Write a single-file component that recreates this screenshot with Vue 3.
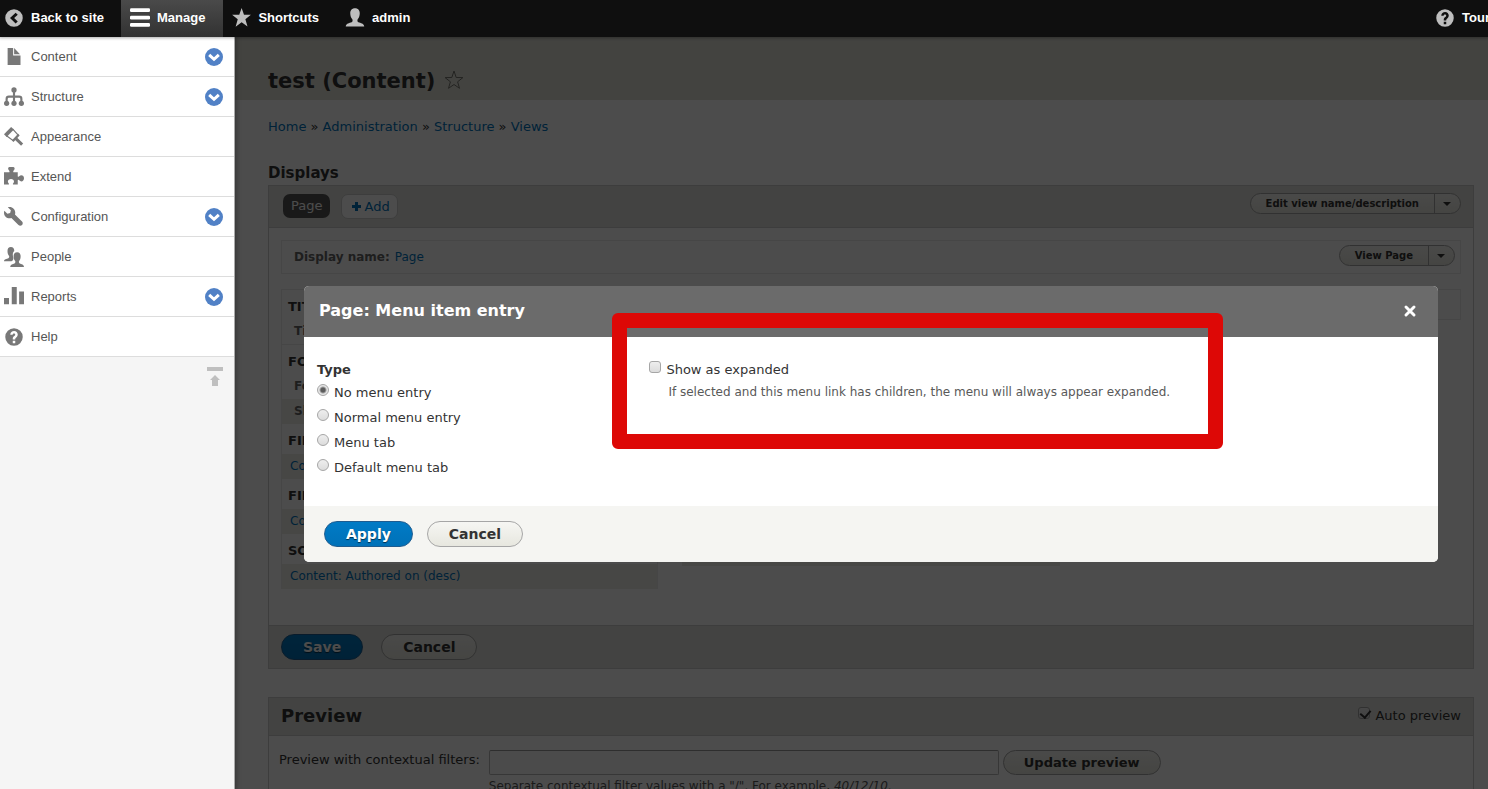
<script setup>
import { ref } from 'vue'

const menu = [
  { label: 'Content', icon: 'file', sub: true },
  { label: 'Structure', icon: 'tree', sub: true },
  { label: 'Appearance', icon: 'brush', sub: false },
  { label: 'Extend', icon: 'puzzle', sub: false },
  { label: 'Configuration', icon: 'wrench', sub: true },
  { label: 'People', icon: 'people', sub: false },
  { label: 'Reports', icon: 'bars', sub: true },
  { label: 'Help', icon: 'help', sub: false },
]
const crumbs = ['Home', 'Administration', 'Structure', 'Views']
const types = ['No menu entry', 'Normal menu entry', 'Menu tab', 'Default menu tab']
const type = ref('No menu entry')
const expanded = ref(false)
const autoPreview = ref(true)
const filters = ref('')
const buckets = [
  { title: 'Fields', link: 'Content: Title' },
  { title: 'Filter criteria', link: 'Content: Published (Yes)' },
  { title: 'Sort criteria', link: 'Content: Authored on (desc)' },
]
const helpPath =
  'M8 1a7 7 0 1 0 0 14A7 7 0 0 0 8 1zm1 12H7v-2h2zm2-7c0 .6-.2 1.1-.5 1.6-.3.4-.7.8-1.1 1.1-.3.2-.4.5-.4.7V10H7v-.8c0-.7.2-1.2.7-1.7.4-.3.7-.5 1-.8.2-.2.3-.4.3-.7 0-.6-.5-.9-1-.9-.6 0-1 .4-1.1 1H5c.1-2 1.4-3 3.1-3C9.800 3.100 11 4.300 11 6z'
const userPath =
  'M8 .2C10.6.2 11.8 1.900 11.800 4.200c0 2.100-.7 3.700-1.500 4.600-.6.7-.5 2.200.4 2.600 1.700.7 4.600.9 4.700 3.400H.6c.1-2.500 3-2.700 4.700-3.400.9-.4 1-1.900.4-2.600C4.900 7.900 4.200 6.300 4.200 4.200 4.200 1.900 5.400.2 8 .2z'
</script>

<template>
  <div class="app">
    <nav class="toolbar" aria-label="Administration toolbar">
      <a href="#" class="tab">
        <svg class="icon" viewBox="0 0 16 16"><path fill-rule="evenodd" d="M8 1a7 7 0 1 0 0 14A7 7 0 0 0 8 1zM9.300 3.700L11 5.300 8.100 8l2.900 2.700-1.700 1.600L4.800 8z" /></svg>
        Back to site
      </a>
      <a href="#" class="tab active">
        <svg class="icon" viewBox="0 0 16 16"><rect y=".2" width="16" height="3" rx="1" /><rect y="6.100" width="16" height="3" rx="1" /><rect y="12" width="16" height="3" rx="1" /></svg>
        Manage
      </a>
      <a href="#" class="tab">
        <svg class="icon" viewBox="0 0 16 16"><path d="M8.500 0l1.900 5.300 5.500.1-4.400 3.500 1.700 5.900-4.700-3.400L3.700 15l1.700-6L.9 5.400l5.700-.1z" /></svg>
        Shortcuts
      </a>
      <a href="#" class="tab">
        <svg class="icon" viewBox="0 0 16 16"><path :d="userPath" /></svg>
        admin
      </a>
      <button type="button" class="tab tour">
        <svg class="icon" viewBox="0 0 16 16"><path fill-rule="evenodd" :d="helpPath" /></svg>
        Tour
      </button>
    </nav>

    <div class="body">
      <aside class="tray">
        <ul class="menu">
          <li v-for="m in menu" :key="m.label">
            <a href="#">
              <svg class="icon" viewBox="0 0 16 16">
                <template v-if="m.icon === 'file'">
                  <path d="M2.900.8h4.400v5.900H13.200V14.300H2.900z" /><path d="M8.100.8l4.700 5H8.100z" />
                </template>
                <template v-else-if="m.icon === 'tree'">
                  <circle cx="8" cy="2.300" r="2.100" /><circle cx="2.100" cy="13" r="2.100" /><circle cx="8" cy="13" r="2.100" /><circle cx="13.900" cy="13" r="2.100" />
                  <path class="line" stroke-width="1.700" d="M8 3v10M2.100 13V9.500q0-1.800 1.800-1.800h8.200q1.800 0 1.800 1.800V13" />
                </template>
                <template v-else-if="m.icon === 'brush'">
                  <path d="M0 5.800L5.700 0l2.200 2L2.100 7.900z" />
                  <path class="line" stroke-width=".9" d="M7 1.700l4.500 4.900-4.300 4.200L2 7" />
                  <path d="M11.300 5.300l1.200 1.400L7.600 11.900l-1.300-1.200z" />
                  <path class="line" stroke-width="2.400" d="M9.300 9.100l5.200 5" />
                </template>
                <path v-else-if="m.icon === 'puzzle'" d="M0 4.100h4.300c.6-1-.9-1.400-1-2.700C3.300.6 3.700 0 4.300 0h3.200c.6 0 1 .6 1 1.400-.1 1.300-1.600 1.700-1 2.700H11v3.500c.9.8 1.400-.9 2.800-1 1.300 0 2.200.8 2.200 2.400s-.9 2.500-2.200 2.500c-1.400-.1-1.900-1.800-2.800-1V14H7.200c-.5-.8.8-1.200.8-2.400 0-1.100-1-2-2.400-2s-2.500.9-2.500 2c0 1.200 1.300 1.600.8 2.400H0z" />
                <path v-else-if="m.icon === 'wrench'" d="M14.416 11.586l-5.666-5.665c.15-.449.252-.921.252-1.421 0-2.485-2.016-4.500-4.502-4.500-.505 0-.981.102-1.434.255l2.431 2.431-.588 2.196-2.196.588-2.445-2.445c-.162.464-.268.956-.268 1.475 0 2.486 2.014 4.500 4.500 4.500.5 0 .972-.102 1.421-.251l5.667 5.665c.781.781 2.047.781 2.828 0s.781-2.047 0-2.828z" />
                <template v-else-if="m.icon === 'people'">
                  <path d="M5.500 0C7.400 0 8.300 1.300 8.200 3.200 7 4.200 6.800 6 7.300 8c.3 1.200.3 2.200-.6 2.900l-.7.5H0c0-1.900 2.200-1.800 3.500-2.400.8-.4.9-1.500.4-2.100C3.200 6 2.800 4.800 2.800 3.200 2.800 1.300 3.700 0 5.500 0z" />
                  <path d="M10.500 4.200c1.900 0 2.800 1.400 2.800 3.200 0 1.600-.4 2.800-1.100 3.700-.5.6-.4 1.700.4 2.100 1.300.6 3.400.7 3.400 2.800H5c0-2.100 2.100-2.200 3.400-2.800.8-.4.9-1.500.4-2.100-.7-.9-1.100-2.100-1.100-3.700 0-1.800.9-3.200 2.800-3.200z" />
                </template>
                <path v-else-if="m.icon === 'bars'" d="M0 8.800h4v5H0zM6.200 0h4v13.800h-4zM12.100 3.500H16v10.300h-3.900z" />
                <path v-else fill-rule="evenodd" :d="helpPath" />
              </svg>
              {{ m.label }}
            </a>
            <button v-if="m.sub" type="button" class="expand" :aria-label="'Extend ' + m.label">
              <svg viewBox="0 0 18 18"><circle cx="9" cy="9" r="9" /><path d="M4.200 6.800L9 11.300l4.800-4.500" /></svg>
            </button>
          </li>
        </ul>
        <button type="button" class="collapse" aria-label="Horizontal orientation">
          <svg viewBox="0 0 16 20"><path d="M0 0h16v4H0zM8 8l5 5h-2v6H5v-6H3z" /></svg>
        </button>
      </aside>

      <main class="page">
        <header class="heading">
          <h1>test (Content)</h1>
          <svg class="star" viewBox="0 0 20 20"><path d="M10 1l2.200 6.500 6.700.1-5.300 4.200 1.900 6.500-5.500-3.800-5.500 3.800 1.900-6.500L1.100 7.600l6.700-.1z" /></svg>
        </header>
        <div class="content">
          <nav class="crumbs" aria-label="Breadcrumb">
            <template v-for="(c, i) in crumbs" :key="c"><span v-if="i"> » </span><a href="#">{{ c }}</a></template>
          </nav>
          <h2 class="displays">Displays</h2>
          <section class="panel">
            <div class="panel-head">
              <div class="tabs">
                <a href="#" class="display-tab">Page</a>
                <a href="#" class="add"><svg viewBox="0 0 9 9"><path d="M3 0h3v3h3v3H6v3H3V6H0V3h3z" /></svg>Add</a>
              </div>
              <div class="drop">
                <button type="button">Edit view name/description</button>
                <button type="button" class="toggle" aria-label="More view actions"><i></i></button>
              </div>
            </div>
            <div class="display">
              <div class="display-name">
                <p><strong>Display name:</strong><a href="#">Page</a></p>
                <div class="drop">
                  <button type="button">View Page</button>
                  <button type="button" class="toggle" aria-label="More page actions"><i></i></button>
                </div>
              </div>
              <div class="columns">
                <div class="column">
                  <div class="bucket">
                    <h3>Title</h3>
                    <p class="setting">Title:</p>
                  </div>
                  <div class="bucket">
                    <h3>Format</h3>
                    <p class="setting">Format:</p>
                    <p class="setting odd">Show:</p>
                  </div>
                  <div v-for="b in buckets" :key="b.title" class="bucket joined">
                    <h3>{{ b.title }}</h3>
                    <p class="row odd"><a href="#">{{ b.link }}</a></p>
                  </div>
                </div>
                <div class="column middle"><p class="odd"></p></div>
                <div class="column"><div class="advanced"></div></div>
              </div>
            </div>
            <div class="panel-foot">
              <button type="button" class="btn primary">Save</button>
              <button type="button" class="btn">Cancel</button>
            </div>
          </section>

          <section class="panel preview">
            <div class="preview-head">
              <h2>Preview</h2>
              <label class="check"><input v-model="autoPreview" type="checkbox" />Auto preview</label>
            </div>
            <div class="preview-body">
              <label for="filters">Preview with contextual filters:</label>
              <div class="field">
                <input id="filters" v-model="filters" type="text" />
                <p>Separate contextual filter values with a "/". For example, <em>40/12/10</em>.</p>
              </div>
              <button type="button" class="btn small">Update preview</button>
            </div>
          </section>
        </div>
        <div class="overlay"></div>
      </main>
    </div>

    <div class="dialog" role="dialog" aria-labelledby="dialog-title">
      <div class="dialog-head">
        <h2 id="dialog-title">Page: Menu item entry</h2>
        <button type="button" class="close" aria-label="Close">
          <svg viewBox="0 0 14 14"><path d="M3 3l8 8M11 3l-8 8" /></svg>
        </button>
      </div>
      <form class="dialog-body" @submit.prevent>
        <fieldset>
          <legend>Type</legend>
          <label v-for="t in types" :key="t" class="check"><input v-model="type" type="radio" name="type" :value="t" />{{ t }}</label>
        </fieldset>
        <div class="option">
          <label class="check"><input v-model="expanded" type="checkbox" />Show as expanded</label>
          <p>If selected and this menu link has children, the menu will always appear expanded.</p>
        </div>
      </form>
      <div class="dialog-foot">
        <button type="button" class="btn primary">Apply</button>
        <button type="button" class="btn">Cancel</button>
      </div>
      <div class="marker"></div>
    </div>
  </div>
</template>

<style>
body { margin: 0; overflow: hidden; }
</style>

<style scoped>
.app {
  position: relative;
  display: flex;
  flex-direction: column;
  height: 100vh;
  overflow: hidden;
  font: 13px/20px "DejaVu Sans", sans-serif;
  color: #333;
  background: #fff;
}
.app * { box-sizing: border-box; }
h1, h2, h3, p, ul { margin: 0; padding: 0; }
button { font: inherit; color: inherit; margin: 0; cursor: pointer; }
a { color: #0074bd; text-decoration: none; }
svg { display: block; flex: none; }

.toolbar {
  position: relative;
  z-index: 3;
  display: flex;
  flex: none;
  height: 37px;
  background: #0f0f0f;
  box-shadow: 0 0 3px 1px rgba(0, 0, 0, .333);
  font: bold 13px/35px "Liberation Sans", Arial, sans-serif;
}
.tab {
  display: flex;
  gap: 7px;
  padding: 0 17px 2px 4px;
  color: #fff;
  background: none;
  border: 0;
  white-space: nowrap;
}
.tab + .tab { padding: 0 18px 2px 8px; }
.icon { width: 20px; height: 20px; fill: #787878; }
.tab .icon { margin-top: 8px; fill: #bebebe; }
.tab.active { padding-left: 9px; background: linear-gradient(#4a4a4a, #323232); }
.tab.active .icon { fill: #fff; }
.tab.tour { margin-left: auto; margin-right: -2px; padding-right: 0; }

.body { display: flex; flex: 1; min-height: 0; }
.tray {
  position: relative;
  z-index: 2;
  flex: none;
  width: 235px;
  background: #f5f5f5;
  border-right: 1px solid #aaa;
  box-shadow: -1px 0 5px 2px rgba(0, 0, 0, .333);
  font: 13px/39px "Liberation Sans", Arial, sans-serif;
}
.menu { list-style: none; }
.menu li {
  display: flex;
  align-items: center;
  justify-content: space-between;
  height: 40px;
  padding: 0 11px 0 4px;
  background: #fff;
  border-bottom: 1px solid #ddd;
}
.menu a { display: flex; align-items: center; gap: 7px; color: #565656; }
.line { fill: none; stroke: #787878; }
.expand, .collapse { padding: 0; background: none; border: 0; }
.expand svg { width: 18px; height: 18px; fill: #5181c6; }
.expand path { fill: none; stroke: #fff; stroke-width: 3; }
.collapse { display: block; margin: 10px 11px 0 auto; }
.collapse svg { width: 16px; height: 20px; fill: #bfbfbf; }

.page { position: relative; flex: 1; min-width: 0; overflow: hidden; }
.overlay { position: absolute; inset: 0; background: rgba(0, 0, 0, .7); }
.heading {
  display: flex;
  align-items: center;
  gap: 9px;
  height: 63px;
  padding: 24px 33px 0;
  background: #e0e0d8;
}
h1 { font-size: 21px; line-height: 24px; color: #333; }
.star { width: 20px; height: 20px; margin-bottom: 2px; fill: none; stroke: #77776f; }
.content { padding: 17px 14px 0 33px; }
.crumbs { white-space: pre; }
.displays { margin: 26px 0 2px; font-size: 15px; line-height: 20px; }
.panel { border: 1px solid #ccc; }
.panel-head {
  display: flex;
  justify-content: space-between;
  height: 42px;
  padding: 7px 12px 0 14px;
  background: #e1e2dc;
  border-bottom: 1px solid #ccc;
}
.tabs { display: flex; gap: 11px; padding-top: 1px; }
.display-tab, .add { height: 24px; padding: 0 8px; border-radius: 7px; line-height: 24px; }
.display-tab { color: #fff; background: #555; }
.add { display: flex; align-items: center; gap: 3px; height: 25px; padding: 0 7px 0 10px; background: #fff; border: 1px solid #ccc; }
.add svg { width: 9px; height: 9px; fill: #0074bd; }
.drop { display: flex; height: 21px; background: linear-gradient(#f6f6f3, #e7e7df); border: 1px solid #a6a6a6; border-radius: 11px; }
.drop button { padding: 0 15px; font-size: 10px; font-weight: bold; line-height: 19px; background: none; border: 0; }
.drop .toggle { padding: 0 9px 0 8px; border-left: 1px solid #a6a6a6; }
.drop i { display: block; border: 4px solid transparent; border-top: 4px solid #333; border-bottom: 0; }
.display { padding: 12px 12px 36px; }
.display-name {
  display: flex;
  justify-content: space-between;
  height: 34px;
  padding: 4px 5px 0 12px;
  border: 1px solid #e9e9e9;
  font-size: 12px;
  line-height: 24px;
}
.display-name strong { margin-right: 5px; color: #666; }
.columns { display: grid; grid-template-columns: repeat(3, 1fr); gap: 24px; margin-top: 15px; font-size: 12px; align-items: start; }
.bucket { padding-top: 4px; border: 1px solid #e9e9e9; border-bottom: 0; }
.bucket.joined { padding-top: 3px; border-top: 0; }
.bucket h3 { height: 25px; padding-left: 6px; font-size: 13px; line-height: 25px; text-transform: uppercase; }
.bucket p { height: 25px; line-height: 25px; }
.bucket.joined h3 { height: 27px; line-height: 27px; }
.setting { padding-left: 12px; font-weight: bold; color: #666; }
.bucket .row { padding-left: 8px; line-height: 24px; }
.odd { background: #eeeee8; }
.middle { padding-top: 252px; }
.middle p { height: 25px; }
.advanced { height: 31px; border: 1px solid #e9e9e9; }
.panel-foot {
  display: flex;
  gap: 18px;
  height: 43px;
  padding: 8px 12px;
  background: #e1e2dc;
  border-top: 1px solid #ccc;
}
.btn {
  height: 26px;
  padding: 0 21px;
  font-size: 14px;
  font-weight: bold;
  line-height: 24px;
  color: #333;
  background: linear-gradient(#f6f6f3, #e7e7df);
  border: 1px solid #a6a6a6;
  border-radius: 13px;
  white-space: nowrap;
}
.btn.primary {
  color: #fff;
  background: linear-gradient(#007bc6, #0071b8);
  border-color: #1e5c90;
  text-shadow: 0 1px 1px rgba(0, 0, 0, .6);
}
.btn.small { height: 25px; padding: 0 20px; font-size: 13px; }

.preview { margin-top: 28px; }
.preview-head {
  display: flex;
  justify-content: space-between;
  height: 38px;
  padding: 0 12px;
  background: #e1e2dc;
  border-bottom: 1px solid #ccc;
}
.preview-head h2 { font-size: 18px; line-height: 36px; }
.preview-head .check { height: 35px; }
.preview-body { display: flex; align-items: flex-start; gap: 4px; padding: 14px 10px 20px; }
.preview-body > label { margin-right: 5px; line-height: 20px; white-space: nowrap; }
.field { width: 510px; flex: 0 1 auto; }
.field input { display: block; width: 100%; height: 25px; padding: 0 8px; background: #fcfcfa; border: 1px solid #b8b8b8; border-top-color: #999; border-radius: 2px; }
.field p { font-size: 12px; line-height: 22px; color: #595959; }

.check { display: flex; align-items: center; gap: 5px; white-space: nowrap; }
.check input {
  appearance: none;
  flex: none;
  width: 12px;
  height: 12px;
  margin: 0 0 5px;
  background: linear-gradient(#eee, #dcdcdc);
  border: 1px solid #a6a6a6;
  border-radius: 3px;
}
.check input[type="radio"] { border-radius: 50%; }
.check input[type="radio"]:checked { background: radial-gradient(#5c5c5c 0 2px, #e6e6e6 4px); }
.check input[type="checkbox"] { margin-bottom: 6px; }
.check input[type="checkbox"]:checked::before {
  content: "";
  display: block;
  width: 5px;
  height: 8px;
  margin: 0 0 0 3px;
  border: solid #333;
  border-width: 0 2px 2px 0;
  transform: rotate(40deg);
}

.dialog {
  position: absolute;
  z-index: 4;
  top: 286px;
  left: 304px;
  right: 50px;
  border-radius: 5px;
  background: #fff;
}
.dialog-head {
  display: flex;
  align-items: center;
  justify-content: space-between;
  height: 51px;
  padding: 0 21px 2px 15px;
  color: #fff;
  background: #6b6b6b;
  border-radius: 5px 5px 0 0;
}
.dialog-head h2 { font-size: 16px; }
.close { padding: 0; background: none; border: 0; }
.close svg { width: 14px; height: 14px; stroke: #fff; stroke-width: 3; stroke-linecap: round; }
.dialog-body { display: grid; grid-template-columns: 3fr 7fr; padding: 23px 13px 26px; }
fieldset { min-width: 0; margin: 0; padding: 0; border: 0; }
legend { padding: 0; font-weight: bold; }
fieldset .check { height: 25px; }
.option .check { height: 20px; }
.option p { padding-left: 19px; font-size: 12px; line-height: 24px; color: #595959; }
.dialog-foot { display: flex; gap: 14px; padding: 15px 20px; background: #f5f5f2; border-radius: 0 0 5px 5px; }
.marker {
  position: absolute;
  top: 27px;
  left: 308px;
  width: 611px;
  height: 136px;
  border: 15px solid #dd0806;
  border-radius: 6px;
  pointer-events: none;
}
</style>
